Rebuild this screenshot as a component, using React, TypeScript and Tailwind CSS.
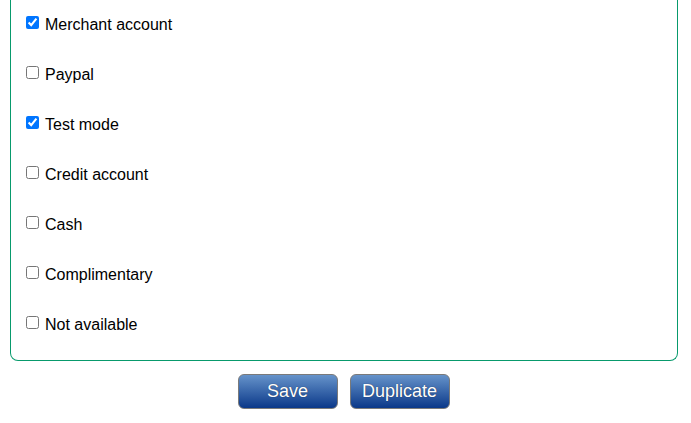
const options = [
  { label: "Merchant account", checked: true },
  { label: "Paypal", checked: false },
  { label: "Test mode", checked: true },
  { label: "Credit account", checked: false },
  { label: "Cash", checked: false },
  { label: "Complimentary", checked: false },
  { label: "Not available", checked: false },
];

export default function App() {
  return (
    <div className="w-[691px] h-[423px] bg-white font-['Liberation_Sans',Arial,sans-serif] text-black overflow-hidden">
      <div className="mx-[10px] w-[668px] -mt-px border-x border-b border-[#089a6c] rounded-b-lg pl-[15px] pb-[11px]">
        {options.map((o) => (
          <label key={o.label} className="flex items-center h-[50px] text-base pt-[2px]">
            <input
              type="checkbox"
              defaultChecked={o.checked}
              className="m-0 w-[13px] h-[13px] mr-[6px] mb-[5px]"
            />
            <span>{o.label}</span>
          </label>
        ))}
      </div>
      <div className="flex justify-center gap-[12px] mt-[13px] pr-[4px]">
        <button className="w-[100px] h-[35px] rounded-md border border-[#7a7a7a] bg-gradient-to-b from-[#6693ca] to-[#0a3889] text-white text-[18px] leading-none pb-[2px] [text-shadow:0_0_1px_rgba(0,0,0,0.6)]">
          Save
        </button>
        <button className="w-[100px] h-[35px] rounded-md border border-[#7a7a7a] bg-gradient-to-b from-[#6693ca] to-[#0a3889] text-white text-[18px] leading-none pb-[2px] [text-shadow:0_0_1px_rgba(0,0,0,0.6)]">
          Duplicate
        </button>
      </div>
    </div>
  );
}
